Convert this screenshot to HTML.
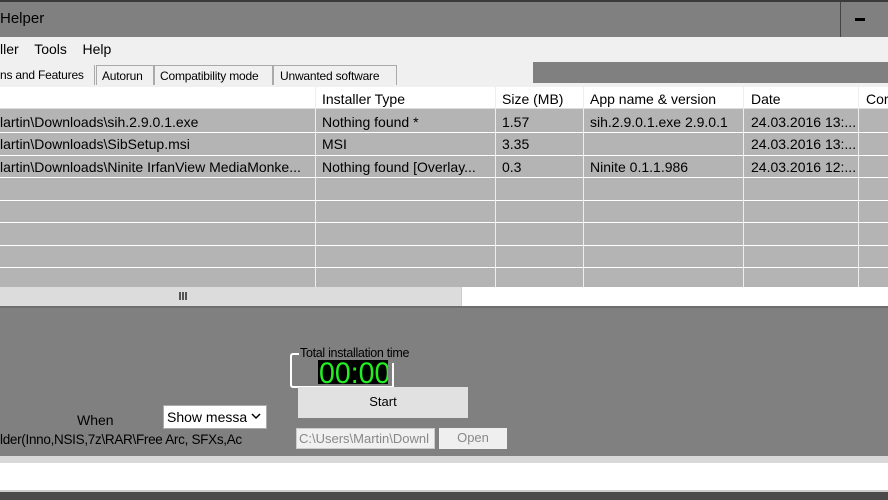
<!DOCTYPE html>
<html><head><style>
*{margin:0;padding:0;box-sizing:border-box}
body{width:888px;height:500px;overflow:hidden;background:#808080;font-family:"Liberation Sans",sans-serif;position:relative;font-size:14px;color:#000}
.a{position:absolute;white-space:nowrap}
</style></head><body>
<div class="a" style="left:0;top:0;width:888px;height:37px;background:#808080;border-top:2px solid #3a3a3a"></div>
<div class="a" style="left:0;top:10px;font-size:15px">Helper</div>
<div class="a" style="left:840px;top:0;width:48px;height:37px;border-left:1px solid #444;border-top:2px solid #3a3a3a"></div>
<div class="a" style="left:855px;top:18px;width:10px;height:3px;background:#000"></div>
<div class="a" style="left:0;top:37px;width:888px;height:50px;background:#f0f0f0"></div>
<div class="a" style="left:0;top:41px;font-size:14px">ller&nbsp;&nbsp;&nbsp;&nbsp;Tools&nbsp;&nbsp;&nbsp;&nbsp;Help</div>
<div class="a" style="left:0;top:65px;height:20px;width:397px;font-size:12px;letter-spacing:-0.2px">
<span class="a" style="left:0;top:0;height:20px;width:95px;border-right:1px solid #aaa;padding-top:3px">ns and Features</span>
<span class="a" style="left:96px;top:0;height:20px;width:58px;border:1px solid #aaa;border-bottom:0;padding:3px 0 0 5px">Autorun</span>
<span class="a" style="left:154px;top:0;height:20px;width:119px;border:1px solid #aaa;border-bottom:0;padding:3px 0 0 5px">Compatibility mode</span>
<span class="a" style="left:273px;top:0;height:20px;width:124px;border:1px solid #aaa;border-bottom:0;padding:3px 0 0 6px">Unwanted software</span>
</div>
<div class="a" style="left:533px;top:62px;width:355px;height:21px;background:#808080"></div>
<div class="a" style="left:0;top:87px;width:888px;height:200px;background:#b4b4b4"></div>
<div class="a" style="left:0;top:87px;width:888px;height:22px;background:#fff;border-bottom:1px solid #ddd"></div>
<div class="a" style="left:0;top:132px;width:888px;height:1px;background:#fff"></div>
<div class="a" style="left:0;top:155px;width:888px;height:1px;background:#fff"></div>
<div class="a" style="left:0;top:177px;width:888px;height:1px;background:#fff"></div>
<div class="a" style="left:0;top:200px;width:888px;height:1px;background:#fff"></div>
<div class="a" style="left:0;top:222px;width:888px;height:1px;background:#fff"></div>
<div class="a" style="left:0;top:245px;width:888px;height:1px;background:#fff"></div>
<div class="a" style="left:0;top:267px;width:888px;height:1px;background:#fff"></div>
<div class="a" style="left:315px;top:87px;width:1px;height:200px;background:#eee"></div>
<div class="a" style="left:495px;top:87px;width:1px;height:200px;background:#eee"></div>
<div class="a" style="left:583px;top:87px;width:1px;height:200px;background:#eee"></div>
<div class="a" style="left:743px;top:87px;width:1px;height:200px;background:#eee"></div>
<div class="a" style="left:858px;top:87px;width:1px;height:200px;background:#eee"></div>
<div class="a" style="left:322px;top:91px">Installer Type</div>
<div class="a" style="left:502px;top:91px">Size (MB)</div>
<div class="a" style="left:590px;top:91px">App name &amp; version</div>
<div class="a" style="left:751px;top:91px">Date</div>
<div class="a" style="left:866px;top:91px">Cor</div>
<div class="a" style="left:0;top:114px">lartin\Downloads\sih.2.9.0.1.exe</div>
<div class="a" style="left:322px;top:114px">Nothing found *</div>
<div class="a" style="left:502px;top:114px">1.57</div>
<div class="a" style="left:590px;top:114px">sih.2.9.0.1.exe 2.9.0.1</div>
<div class="a" style="left:751px;top:114px">24.03.2016 13:...</div>
<div class="a" style="left:0;top:136px">lartin\Downloads\SibSetup.msi</div>
<div class="a" style="left:322px;top:136px">MSI</div>
<div class="a" style="left:502px;top:136px">3.35</div>
<div class="a" style="left:751px;top:136px">24.03.2016 13:...</div>
<div class="a" style="left:0;top:159px">lartin\Downloads\Ninite IrfanView MediaMonke...</div>
<div class="a" style="left:322px;top:159px">Nothing found [Overlay...</div>
<div class="a" style="left:502px;top:159px">0.3</div>
<div class="a" style="left:590px;top:159px">Ninite 0.1.1.986</div>
<div class="a" style="left:751px;top:159px">24.03.2016 12:...</div>
<div class="a" style="left:0;top:287px;width:888px;height:19px;background:#fff"></div>
<div class="a" style="left:0;top:287px;width:462px;height:19px;background:#dcdcdc;border-right:1px solid #ccc"></div>
<div class="a" style="left:179px;top:292px;width:2px;height:8px;background:#555;box-shadow:3px 0 #555,6px 0 #555"></div>
<div class="a" style="left:0;top:306px;width:888px;height:2px;background:#6e6e6e"></div>
<div class="a" style="left:290px;top:353px;width:104px;height:35px;border:2px solid #fff;border-right:0;border-radius:3px 0 0 3px"></div>
<div class="a" style="left:392px;top:363px;width:2px;height:25px;background:#fff"></div>
<div class="a" style="left:299px;top:346px;font-size:12.5px;background:#808080;padding:0 1px;letter-spacing:-0.3px">Total installation time</div>
<div class="a" style="left:318px;top:360px;width:70px;height:24px;background:#000;overflow:hidden">
<span class="a" style="left:1px;top:-2px;color:#22ee22;font-size:30px;line-height:32px;font-family:'Liberation Sans',sans-serif;transform:scaleX(0.95);transform-origin:left">00:00</span></div>
<div class="a" style="left:298px;top:387px;width:170px;height:31px;background:#e1e1e1;font-size:13px;text-align:center;line-height:30px">Start</div>
<div class="a" style="left:77px;top:412px;font-size:14px">When</div>
<div class="a" style="left:163px;top:405px;width:104px;height:24px;background:#fff;border:1px solid #aaa;font-size:14px;padding:3px 0 0 3px;overflow:hidden"><span style="display:inline-block;width:80px;overflow:hidden;vertical-align:top">Show messag</span></div>
<svg class="a" style="left:251px;top:412px" width="10" height="8" viewBox="0 0 10 8"><path d="M1 2 L5 6 L9 2" fill="none" stroke="#000" stroke-width="1.5"/></svg>
<div class="a" style="left:0;top:432px;font-size:13.5px;letter-spacing:-0.3px">lder(Inno,NSIS,7z\RAR\Free Arc, SFXs,Ac</div>
<div class="a" style="left:296px;top:428px;width:139px;height:21px;background:#f0f0f0;border:1px solid #ccc;color:#888;font-size:13px;padding:2px 0 0 2px;overflow:hidden">C:\Users\Martin\Downl</div>
<div class="a" style="left:439px;top:428px;width:68px;height:21px;background:#efefef;color:#888;font-size:13px;text-align:center;line-height:20px">Open</div>
<div class="a" style="left:0;top:456px;width:888px;height:7px;background:#d8d8d8"></div>
<div class="a" style="left:0;top:463px;width:888px;height:27px;background:#fff"></div>
<div class="a" style="left:0;top:490px;width:888px;height:10px;background:#4a4a4a;border-top:2px solid #ccc"></div>
</body></html>
